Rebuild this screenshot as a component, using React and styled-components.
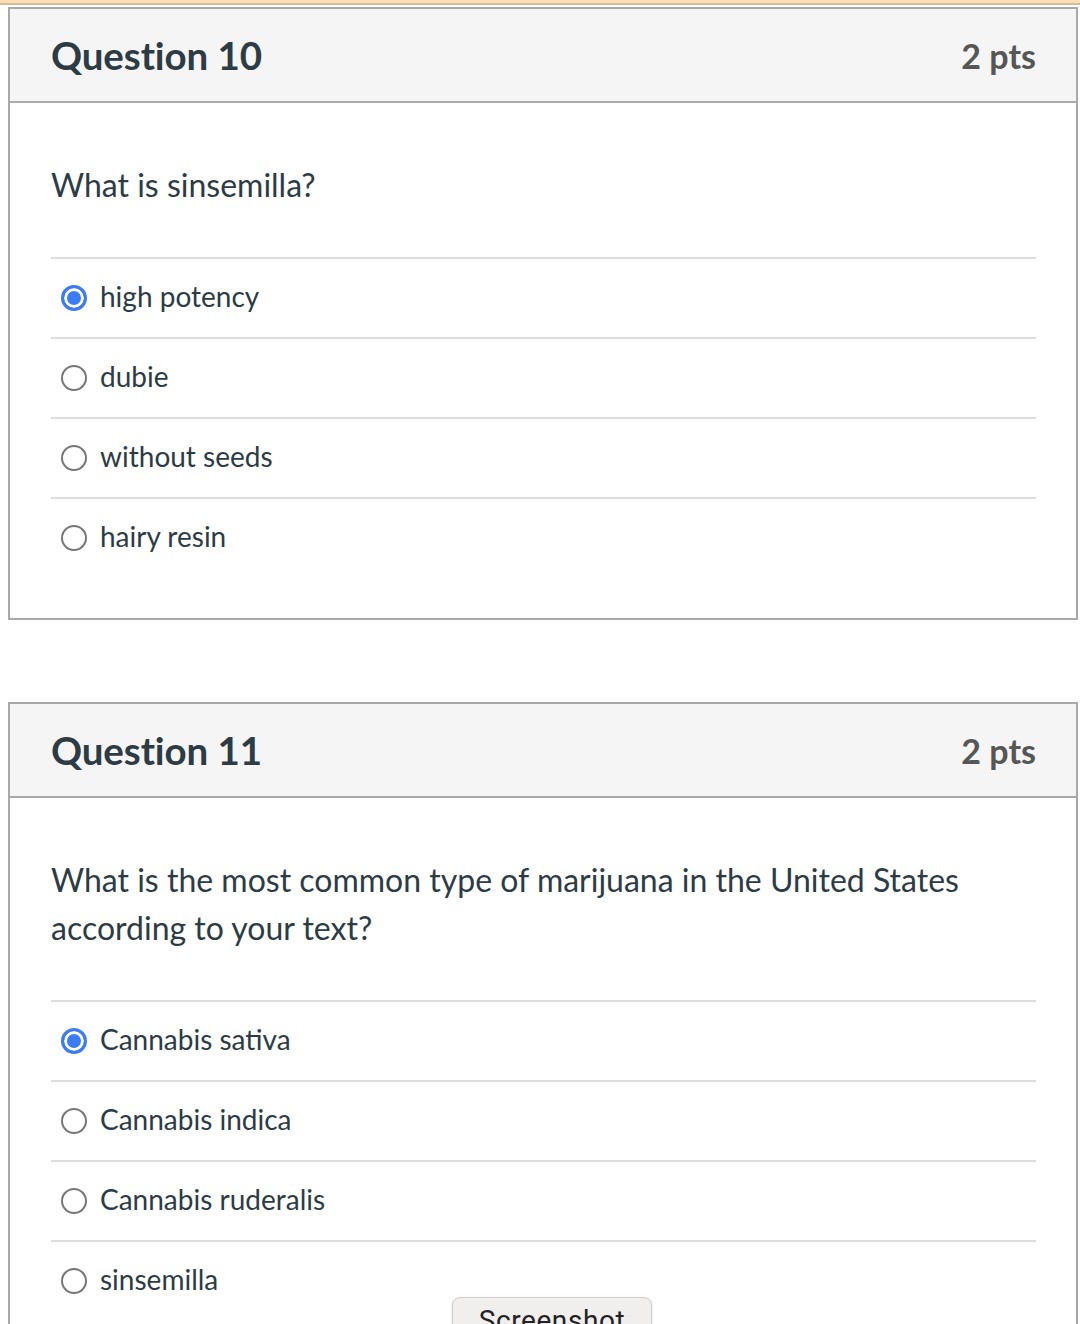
import React from "react";
import styled, { createGlobalStyle } from "styled-components";

const GlobalStyle = createGlobalStyle`
  html, body {
    margin: 0;
    padding: 0;
    background: #ffffff;
    font-family: Lato, "Open Sans", "Liberation Sans", sans-serif;
    color: #2d3b45;
  }
  * {
    box-sizing: border-box;
  }
`;

const Page = styled.div`
  position: relative;
  min-height: 1324px;
  overflow: hidden;
`;

const TopBand = styled.div`
  height: 5px;
  background: #fddfb3;
  border-bottom: 2px solid #d6bc98;
`;

const Content = styled.div`
  padding: 2px 2px 0 8px;
  display: flex;
  flex-direction: column;
  gap: 82px;
`;

const Card = styled.section`
  border: 2px solid #a9a9a9;
  width: 1070px;
`;

const Header = styled.header`
  display: flex;
  align-items: center;
  justify-content: space-between;
  height: 94px;
  padding: 0 40px 0 41px;
  background: #f5f5f5;
  border-bottom: 2px solid #a9a9a9;
`;

const Title = styled.h2`
  margin: 0;
  font-size: 38.5px;
  font-weight: 700;
  color: #2d3b45;
  letter-spacing: -0.1px;
`;

const Points = styled.div`
  font-size: 34px;
  font-weight: 700;
  color: #565656;
`;

const Body = styled.div`
  padding: 58px 40px 41px 41px;
`;

const QuestionText = styled.p`
  margin: 0 0 48px;
  font-size: 32px;
  line-height: 48px;
  color: #2d3b45;
`;

const Answers = styled.div`
  display: flex;
  flex-direction: column;
`;

const Answer = styled.label`
  display: flex;
  align-items: center;
  height: 80px;
  border-top: 2px solid #dddddd;
  padding-left: 10px;
  padding-bottom: 4px;
  font-size: 28px;
  color: #2d3b45;
`;

const Radio = styled.span`
  width: 26px;
  height: 26px;
  border-radius: 50%;
  flex: 0 0 auto;
  margin-right: 13px;
  margin-top: 3px;
  border: ${(p) => (p.$checked ? "3px solid #3b7cf4" : "2px solid #767676")};
  background: ${(p) => (p.$checked ? "#3b7cf4" : "#fff")};
  box-shadow: ${(p) => (p.$checked ? "inset 0 0 0 3px #fff" : "none")};
`;

const ShotButton = styled.div`
  position: absolute;
  left: 452px;
  top: 1297px;
  width: 200px;
  height: 60px;
  border: 1px solid #d2d0d0;
  border-radius: 8px;
  background: #f1eeee;
  box-shadow: 0 1px 3px rgba(0, 0, 0, 0.15);
  font-family: Roboto, "Liberation Sans", sans-serif;
  font-size: 28px;
  letter-spacing: 0.6px;
  color: #222;
  text-align: center;
  padding-top: 6px;
`;

const questions = [
  {
    title: "Question 10",
    pts: "2 pts",
    text: "What is sinsemilla?",
    answers: ["high potency", "dubie", "without seeds", "hairy resin"],
    checked: 0,
  },
  {
    title: "Question 11",
    pts: "2 pts",
    text: "What is the most common type of marijuana in the United States according to your text?",
    answers: ["Cannabis sativa", "Cannabis indica", "Cannabis ruderalis", "sinsemilla"],
    checked: 0,
  },
];

export default function App() {
  return (
    <Page>
      <GlobalStyle />
      <TopBand />
      <Content>
        {questions.map((q) => (
          <Card key={q.title}>
            <Header>
              <Title>{q.title}</Title>
              <Points>{q.pts}</Points>
            </Header>
            <Body>
              <QuestionText>{q.text}</QuestionText>
              <Answers>
                {q.answers.map((a, i) => (
                  <Answer key={a}>
                    <Radio $checked={i === q.checked} />
                    {a}
                  </Answer>
                ))}
              </Answers>
            </Body>
          </Card>
        ))}
      </Content>
      <ShotButton>Screenshot</ShotButton>
    </Page>
  );
}
